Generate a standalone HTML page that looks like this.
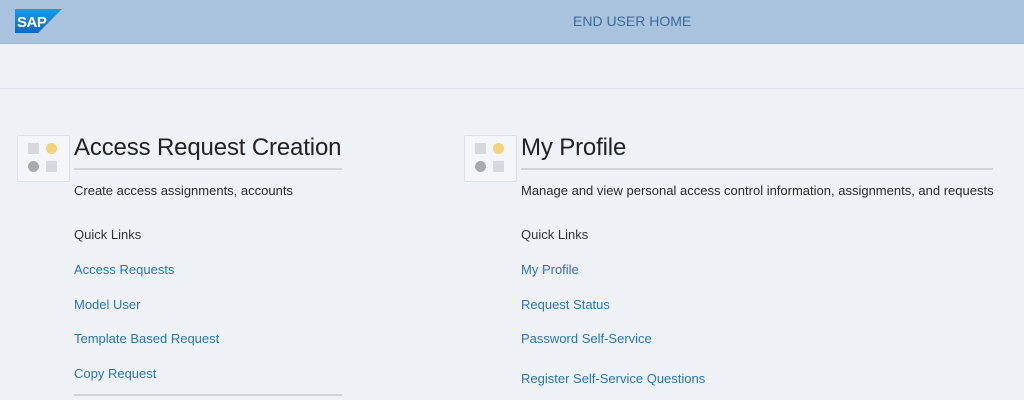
<!DOCTYPE html>
<html><head><style>
body{margin:0;width:1024px;height:400px;overflow:hidden;background:#eef2f7;font-family:"Liberation Sans",Arial,sans-serif;position:relative}
.hdr{position:absolute;left:0;top:0;width:1024px;height:43px;background:#a9c3df;border-bottom:1px solid #9fb8d4}
.ttl{position:absolute;left:573px;top:13px;font-size:14px;color:#3e6b94}
.sep{position:absolute;left:0;top:88px;width:1024px;height:1px;background:#dde4ee}
.t{position:absolute;white-space:nowrap}
.h{font-size:24px;color:#222;letter-spacing:-0.15px}
.d{font-size:13px;color:#2b2b2b}
.a{font-size:13px;color:#2a74b8}
.q{font-size:13px;color:#333}
.ln{position:absolute;height:2px;background:#d0d3d8}
.ic{position:absolute;width:51px;height:45px;border:1px solid #dcdfe3;background:#f3f5f8;border-radius:2px}
.ic i{position:absolute;width:11px;height:11px;background:#d6d8db}
</style></head><body>
<div class="hdr">
<svg style="position:absolute;left:15px;top:9px" width="47" height="24" viewBox="0 0 47 24"><defs><linearGradient id="g" x1="0" y1="0" x2="0" y2="1"><stop offset="0" stop-color="#1a9be6"/><stop offset="1" stop-color="#1466c0"/></linearGradient></defs><polygon points="0,0 47,0 23,24 0,24" fill="url(#g)"/><text x="2" y="18" font-family="Liberation Sans" font-weight="bold" font-size="15" fill="#fff" letter-spacing="-0.5">SAP</text></svg>
<div class="ttl">END USER HOME</div>
</div>
<div class="sep"></div>

<div class="ic" style="left:17px;top:135px"><i style="left:10px;top:7px"></i><i style="left:28px;top:7px;border-radius:50%;background:#f2d37a"></i><i style="left:10px;top:25px;border-radius:50%;background:#a7a9ab"></i><i style="left:28px;top:25px"></i></div>
<div class="t h" style="left:74px;top:134px">Access Request Creation</div>
<div class="ln" style="left:74px;top:168px;width:268px"></div>
<div class="t d" style="left:74px;top:183px">Create access assignments, accounts</div>
<div class="t q" style="left:74px;top:227px">Quick Links</div>
<div class="t a" style="left:74px;top:262px">Access Requests</div>
<div class="t a" style="left:74px;top:297px">Model User</div>
<div class="t a" style="left:74px;top:331px">Template Based Request</div>
<div class="t a" style="left:74px;top:366px">Copy Request</div>
<div class="ln" style="left:74px;top:394px;width:268px"></div>

<div class="ic" style="left:464px;top:135px"><i style="left:10px;top:7px"></i><i style="left:28px;top:7px;border-radius:50%;background:#f2d37a"></i><i style="left:10px;top:25px;border-radius:50%;background:#a7a9ab"></i><i style="left:28px;top:25px"></i></div>
<div class="t h" style="left:521px;top:134px">My Profile</div>
<div class="ln" style="left:521px;top:168px;width:472px"></div>
<div class="t d" style="left:521px;top:183px">Manage and view personal access control information, assignments, and requests</div>
<div class="t q" style="left:521px;top:227px">Quick Links</div>
<div class="t a" style="left:521px;top:262px">My Profile</div>
<div class="t a" style="left:521px;top:297px">Request Status</div>
<div class="t a" style="left:521px;top:331px">Password Self-Service</div>
<div class="t a" style="left:521px;top:371px">Register Self-Service Questions</div>
</body></html>
